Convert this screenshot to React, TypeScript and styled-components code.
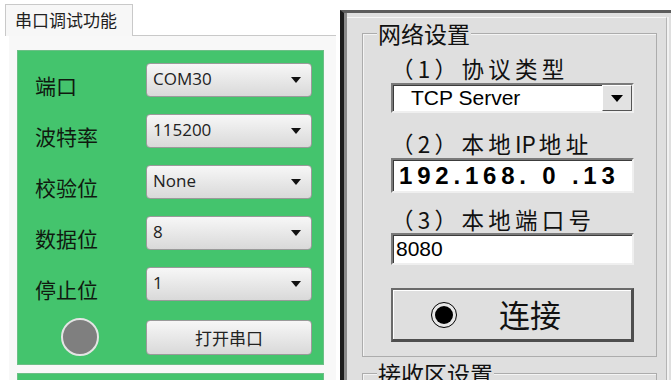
import React from "react";
import styled, { createGlobalStyle } from "styled-components";

const Global = createGlobalStyle`
  html, body { margin: 0; padding: 0; background: #ffffff; }
  body { font-family: "Noto Sans CJK SC", "Noto Sans", sans-serif; }
`;

const Page = styled.div`
  width: 671px;
  height: 380px;
  display: flex;
  overflow: hidden;
  background: #ffffff;
`;

/* ---------- Left (Qt) panel ---------- */
const Left = styled.div`
  width: 336px;
  display: flex;
  flex-direction: column;
`;

const TabBar = styled.div`
  height: 36px;
  flex-shrink: 0;
  display: flex;
  align-items: flex-end;
  padding-left: 5px;
`;

const Tab = styled.div`
  width: 128px;
  height: 32px;
  box-sizing: border-box;
  border: 1px solid #c9c9c9;
  border-bottom: none;
  background: #f7f7f7;
  font-size: 17px;
  line-height: 30px;
  padding-left: 9px;
  color: #222;
`;

const TabRest = styled.div`
  flex: 1;
  border-bottom: 1px solid #c9c9c9;
`;

const Pane = styled.div`
  flex: 1;
  min-height: 0;
  overflow: hidden;
  margin-left: 9px;
  padding: 14px 0 0 8px;
  background: #f8f8f8;
  display: flex;
  flex-direction: column;
  gap: 8px;
`;

const GreenBox = styled.div<{ $h: number }>`
  width: 307px;
  height: ${(p) => p.$h}px;
  box-sizing: border-box;
  background: #44c46d;
  border: 1px solid #6cbf86;
  padding: 12px 11px 0 17px;
  display: grid;
  grid-template-columns: 1fr 166px;
  row-gap: 17px;
  align-content: start;
  align-items: center;
  flex-shrink: 0;
`;

const Label = styled.div`
  font-size: 21px;
  color: #101a10;
  padding-top: 10px;
  line-height: 24px;
`;

const QtCombo = styled.div`
  height: 34px;
  box-sizing: border-box;
  border: 1px solid #9a9a9a;
  border-radius: 4px;
  background: linear-gradient(#f7f7f7, #d9d9d9);
  display: flex;
  align-items: center;
  justify-content: space-between;
  padding: 0 10px 3px 6px;
  font-family: "Open Sans", "Noto Sans", sans-serif;
  font-size: 17px;
  color: #222;
`;

const QtArrow = styled.span`
  width: 0;
  height: 0;
  border-left: 5px solid transparent;
  border-right: 5px solid transparent;
  border-top: 6px solid #111;
  margin-top: 3px;
`;

const Lamp = styled.div`
  width: 38px;
  height: 38px;
  box-sizing: border-box;
  border-radius: 50%;
  border: 2px solid #e4e4e4;
  background: #7f7f7f;
  margin-left: 26px;
`;

const QtButton = styled.div`
  height: 35px;
  box-sizing: border-box;
  border: 1px solid #9a9a9a;
  border-radius: 4px;
  background: linear-gradient(#f7f7f7, #d9d9d9);
  display: flex;
  align-items: center;
  justify-content: center;
  font-size: 17px;
  color: #222;
`;

/* ---------- Right (Win32) panel ---------- */
const Right = styled.div`
  margin-left: 4px;
  margin-top: 10px;
  flex: 1;
  height: 370px;
  overflow: hidden;
  box-sizing: border-box;
  border-left: 4px solid #1c1c1c;
  border-top: 3px solid #5c5c5c;
  background: #dfdfdf;
  box-shadow: inset 3px 0 0 #8a8a8a;
  display: flex;
  flex-direction: column;
`;

const Frame = styled.div`
  margin: 4px 4px 0 3px;
  border-top: 1px solid #f6f6f6;
  border-right: 1px solid #b5b5b5;
  box-shadow: 2px 0 0 #f2f2f2;
  padding: 3px 9px 0 15px;
  display: flex;
  flex-direction: column;
  gap: 4px;
`;

const Group = styled.fieldset`
  margin: 0;
  padding: 0;
  border: 1px solid #acacac;
  box-shadow: inset 1px 1px 0 #f4f4f4;
  min-width: 0;
`;

const Legend = styled.legend`
  margin-left: 14px;
  padding: 0 1px;
  font-size: 23px;
  line-height: 24px;
  color: #111;
  background: #dfdfdf;
`;

const GroupBody = styled.div<{ $h?: number }>`
  padding: 0 22px 14px 28px;
  display: flex;
  flex-direction: column;
  ${(p) => (p.$h ? `height: ${p.$h}px;` : "")}
`;

const WinLabel = styled.div<{ $mt: number }>`
  margin-top: ${(p) => p.$mt}px;
  font-size: 22.5px;
  line-height: 24px;
  letter-spacing: 4.3px;
  color: #111;
  white-space: nowrap;
`;

const Latin = styled.span`
  letter-spacing: 0;
  margin-right: 3px;
`;

const Sunken = styled.div<{ $mt: number; $h: number }>`
  margin-top: ${(p) => p.$mt}px;
  height: ${(p) => p.$h}px;
  box-sizing: border-box;
  background: #ffffff;
  border: 2px solid;
  border-color: #7a7a7a #efefef #efefef #7a7a7a;
  box-shadow: inset 1px 1px 0 #3c3c3c;
  display: flex;
  align-items: center;
  font-family: "Liberation Sans", Arial, sans-serif;
  color: #000;
`;

const ComboText = styled.span`
  flex: 1;
  padding-left: 18px;
  font-size: 21px;
`;

const DropButton = styled.div`
  width: 30px;
  height: 100%;
  box-sizing: border-box;
  background: #e2e2e2;
  border: 1px solid;
  border-color: #ffffff #555 #555 #ffffff;
  display: flex;
  align-items: center;
  justify-content: center;
`;

const WinArrow = styled.span`
  width: 0;
  height: 0;
  border-left: 6px solid transparent;
  border-right: 6px solid transparent;
  border-top: 7px solid #000;
`;

const IpText = styled.span`
  padding-left: 6px;
  font-size: 24px;
  font-weight: bold;
  letter-spacing: 4.8px;
  white-space: pre;
`;

const PortText = styled.span`
  padding-left: 3px;
  font-size: 21px;
`;

const ConnectButton = styled.div`
  margin-top: 23px;
  height: 54px;
  box-sizing: border-box;
  background: #dfdfdf;
  border: 2px solid #6a6a6a;
  border-right: 3px solid #4e4e4e;
  border-bottom: 3px solid #4e4e4e;
  box-shadow: inset 1px 1px 0 #ffffff;
  display: flex;
  align-items: center;
  padding-left: 38px;
  gap: 42px;
`;

const Radio = styled.div`
  width: 26px;
  height: 26px;
  box-sizing: border-box;
  border-radius: 50%;
  border: 1.5px solid #000;
  background: #e8e8e8;
  display: flex;
  align-items: center;
  justify-content: center;
`;

const RadioDot = styled.div`
  width: 18px;
  height: 18px;
  border-radius: 50%;
  background: #000;
`;

const ConnectText = styled.span`
  font-size: 31px;
  line-height: 1;
  color: #111;
  padding-bottom: 2px;
`;

const leftRows: [string, string][] = [
  ["端口", "COM30"],
  ["波特率", "115200"],
  ["校验位", "None"],
  ["数据位", "8"],
  ["停止位", "1"],
];

export default function App() {
  return (
    <>
      <Global />
      <Page>
        <Left>
          <TabBar>
            <Tab>串口调试功能</Tab>
            <TabRest />
          </TabBar>
          <Pane>
            <GreenBox $h={315}>
              {leftRows.map(([label, value]) => (
                <React.Fragment key={label}>
                  <Label>{label}</Label>
                  <QtCombo>
                    <span>{value}</span>
                    <QtArrow />
                  </QtCombo>
                </React.Fragment>
              ))}
              <Lamp />
              <QtButton>打开串口</QtButton>
            </GreenBox>
            <GreenBox $h={20} />
          </Pane>
        </Left>
        <Right>
          <Frame>
            <Group>
              <Legend>网络设置</Legend>
              <GroupBody>
                <WinLabel $mt={11}>（1）协议类型</WinLabel>
                <Sunken $mt={3} $h={30}>
                  <ComboText>TCP Server</ComboText>
                  <DropButton>
                    <WinArrow />
                  </DropButton>
                </Sunken>
                <WinLabel $mt={18}>
                  （2）本地<Latin>IP</Latin>地址
                </WinLabel>
                <Sunken $mt={3} $h={35}>
                  <IpText>{"192.168. 0 .13"}</IpText>
                </Sunken>
                <WinLabel $mt={14}>（3）本地端口号</WinLabel>
                <Sunken $mt={2} $h={32}>
                  <PortText>8080</PortText>
                </Sunken>
                <ConnectButton>
                  <Radio>
                    <RadioDot />
                  </Radio>
                  <ConnectText>连接</ConnectText>
                </ConnectButton>
              </GroupBody>
            </Group>
            <Group>
              <Legend>接收区设置</Legend>
              <GroupBody $h={40} />
            </Group>
          </Frame>
        </Right>
      </Page>
    </>
  );
}
